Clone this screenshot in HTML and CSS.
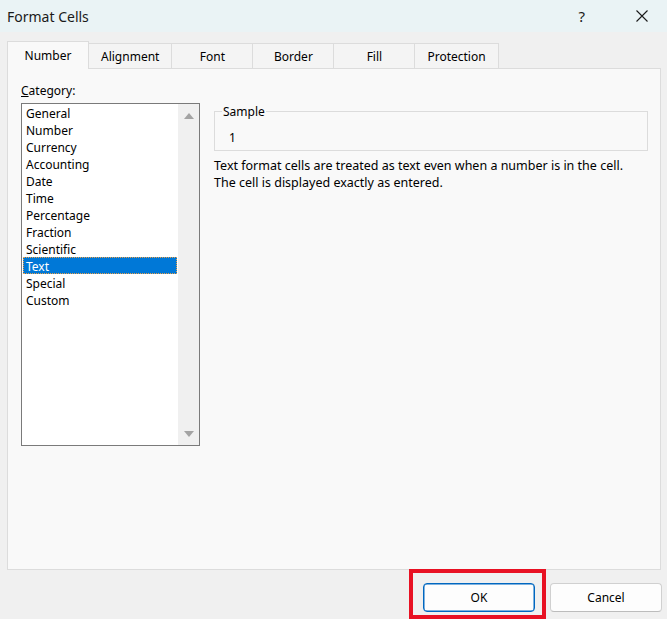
FILE: index.html
```html
<!DOCTYPE html>
<html lang="en">
<head>
<meta charset="utf-8">
<title>Format Cells</title>
<link rel="stylesheet" href="styles.css">
</head>
<body>
<div class="dialog">
  <header class="titlebar">
    <span class="title">Format Cells</span>
    <div class="title-actions">
      <span class="help">?</span>
      <span class="close">
        <svg width="12" height="12" viewBox="0 0 12 12"><path d="M0.5 0.5 L11.5 11.5 M11.5 0.5 L0.5 11.5" stroke="#1a1a1a" stroke-width="1.1" fill="none"/></svg>
      </span>
    </div>
  </header>

  <nav class="tabs">
    <div class="tab active">Number</div>
    <div class="tab">Alignment</div>
    <div class="tab">Font</div>
    <div class="tab">Border</div>
    <div class="tab">Fill</div>
    <div class="tab">Protection</div>
  </nav>

  <main class="panel">
    <section class="left">
      <div class="label"><u>C</u>ategory:</div>
      <div class="listbox">
        <ul class="items">
          <li>General</li>
          <li>Number</li>
          <li>Currency</li>
          <li>Accounting</li>
          <li>Date</li>
          <li>Time</li>
          <li>Percentage</li>
          <li>Fraction</li>
          <li>Scientific</li>
          <li class="selected">Text</li>
          <li>Special</li>
          <li>Custom</li>
        </ul>
        <div class="scrollbar">
          <svg class="arrow" width="10" height="6" viewBox="0 0 10 6"><path d="M5 0 L10 6 L0 6 Z" fill="#a3a3a3"/></svg>
          <svg class="arrow" width="10" height="6" viewBox="0 0 10 6"><path d="M0 0 L10 0 L5 6 Z" fill="#a3a3a3"/></svg>
        </div>
      </div>
    </section>
    <section class="right">
      <fieldset class="sample">
        <legend>Sample</legend>
        <div class="sample-value">1</div>
      </fieldset>
      <p class="desc">Text format cells are treated as text even when a number is in the cell.<br>The cell is displayed exactly as entered.</p>
    </section>
  </main>

  <footer class="buttons">
    <div class="btn-wrap">
      <button class="btn primary">OK</button>
      <span class="highlight"></span>
    </div>
    <button class="btn">Cancel</button>
  </footer>
</div>
</body>
</html>
```

FILE: styles.css
```css
* { box-sizing: border-box; }

html, body {
  margin: 0;
  padding: 0;
}

body {
  width: 667px;
  height: 619px;
  overflow: hidden;
  background: #f0f0f0;
  font-family: "Noto Sans", "Open Sans", sans-serif;
  font-size: 12px;
  color: #000;
}

.dialog {
  display: flex;
  flex-direction: column;
  height: 619px;
}

.titlebar {
  height: 32px;
  background: #eaf3f5;
  display: flex;
  align-items: center;
  justify-content: space-between;
  padding: 0 19px 0 7px;
}

.title {
  font-size: 14px;
  color: #1a1a1a;
}

.title-actions {
  display: flex;
  align-items: center;
  gap: 51px;
}

.help {
  font-size: 15px;
  color: #1a1a1a;
}

.close {
  display: flex;
}

.tabs {
  display: flex;
  align-items: flex-end;
  padding: 9px 0 0 7px;
  height: 36px;
}

.tab {
  height: 25px;
  min-width: 81px;
  padding: 1px 12px 0;
  display: flex;
  align-items: center;
  justify-content: center;
  background: #f4f4f4;
  border-top: 1px solid #dcdcdc;
  border-right: 1px solid #dcdcdc;
}

.tab.active {
  height: 28px;
  min-width: 82px;
  padding-bottom: 2px;
  background: #f9f9f9;
  position: relative;
  z-index: 1;
  margin-bottom: -1px;
  border-left: 1px solid #dcdcdc;
}

.panel {
  margin: 0 6px 0 7px;
  height: 502px;
  background: #f9f9f9;
  border: 1px solid #dcdcdc;
  display: flex;
  gap: 14px;
  padding: 13px 12px 0 13px;
}

.left {
  width: 179px;
  flex: none;
}

.label {
  line-height: 17px;
  margin-bottom: 4px;
}

.listbox {
  height: 343px;
  border: 1px solid #7a7a7a;
  background: #fff;
  display: flex;
}

.items {
  list-style: none;
  margin: 0;
  padding: 0;
  flex: 1;
}

.items li {
  height: 17px;
  line-height: 17px;
  padding: 1px 0 0 3px;
  margin: 0 1px;
}

.items li.selected {
  background: #0078d7;
  color: #fff;
  outline: 1px dotted #e8a04a;
  outline-offset: -1px;
}

.scrollbar {
  width: 21px;
  background: #f0f0f0;
  display: flex;
  flex-direction: column;
  justify-content: space-between;
  align-items: center;
  padding: 9px 0 8px;
}

.right {
  flex: 1;
  padding-top: 21px;
}

.sample {
  margin: 0;
  border: 1px solid #dcdcdc;
  padding: 9px 14px 4px;
  min-width: 0;
}

.sample legend {
  padding: 0 1px;
  margin-left: -7px;
  line-height: 17px;
}

.sample-value {
  line-height: 17px;
}

.desc {
  margin: 6px 0 0;
  line-height: 17px;
  font-size: 12.5px;
}

.buttons {
  display: flex;
  justify-content: flex-end;
  gap: 15px;
  padding: 13px 5px 0 0;
}

.btn-wrap {
  position: relative;
  display: flex;
}

.btn {
  width: 112px;
  height: 29px;
  font-family: inherit;
  font-size: 12px;
  color: #000;
  background: #fdfdfd;
  border: 1px solid #d0d0d0;
  border-bottom-color: #bcbcbc;
  border-radius: 4px;
  padding: 0;
}

.btn.primary {
  border: 1px solid #0067c0;
  box-shadow: inset 0 0 0 0.5px #0067c0;
}

.highlight {
  position: absolute;
  left: -14px;
  top: -14px;
  width: 137px;
  height: 50px;
  border: 4px solid #e81123;
  pointer-events: none;
}
```
